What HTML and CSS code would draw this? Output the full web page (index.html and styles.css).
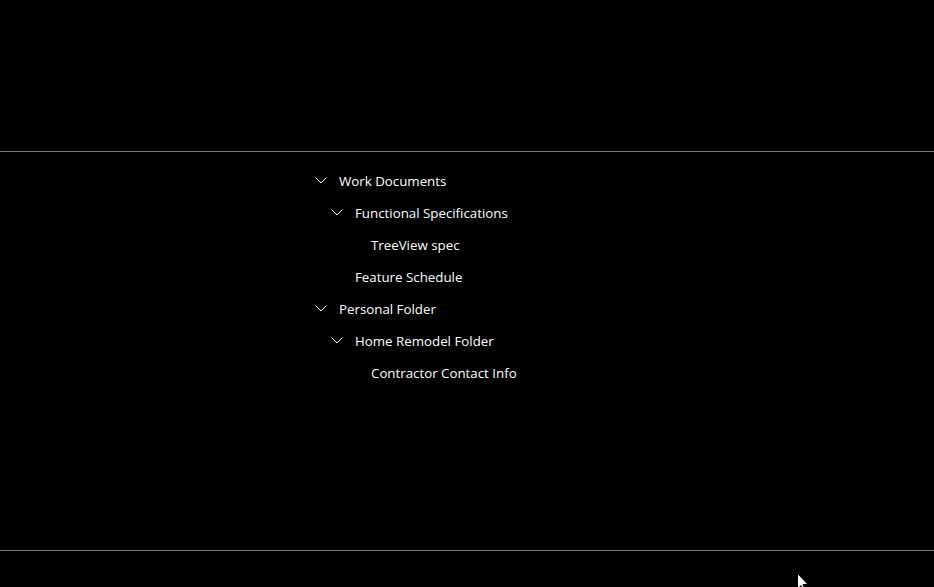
FILE: index.html
```html
<!DOCTYPE html>
<html>
<head>
<meta charset="utf-8">
<link rel="stylesheet" href="styles.css">
</head>
<body>
<div class="top"></div>
<div class="main">
  <ul class="tree">
    <li class="row lvl0"><span class="chev"><svg width="12" height="7" viewBox="0 0 12 7"><path d="M0.5 0.5 L6 6 L11.5 0.5" fill="none" stroke="#fff" stroke-width="1"/></svg></span><span class="label">Work Documents</span></li>
    <li class="row lvl1"><span class="chev"><svg width="12" height="7" viewBox="0 0 12 7"><path d="M0.5 0.5 L6 6 L11.5 0.5" fill="none" stroke="#fff" stroke-width="1"/></svg></span><span class="label">Functional Specifications</span></li>
    <li class="row lvl2"><span class="chev"></span><span class="label">TreeView spec</span></li>
    <li class="row lvl1"><span class="chev"></span><span class="label">Feature Schedule</span></li>
    <li class="row lvl0"><span class="chev"><svg width="12" height="7" viewBox="0 0 12 7"><path d="M0.5 0.5 L6 6 L11.5 0.5" fill="none" stroke="#fff" stroke-width="1"/></svg></span><span class="label">Personal Folder</span></li>
    <li class="row lvl1"><span class="chev"><svg width="12" height="7" viewBox="0 0 12 7"><path d="M0.5 0.5 L6 6 L11.5 0.5" fill="none" stroke="#fff" stroke-width="1"/></svg></span><span class="label">Home Remodel Folder</span></li>
    <li class="row lvl2"><span class="chev"></span><span class="label">Contractor Contact Info</span></li>
  </ul>
</div>
<div class="bottom"></div>
<svg class="cursor" width="12" height="19" viewBox="0 0 12 19"><path d="M0.5 0.5 L0.5 16 L4 12.5 L6.5 18 L8.5 17 L6 11.5 L11 11.5 Z" fill="#fff" stroke="#000" stroke-width="1"/></svg>
</body>
</html>
```

FILE: styles.css
```css
html, body {
  margin: 0;
  padding: 0;
  background: #000;
  height: 100%;
  overflow: hidden;
}
body {
  font-family: "Open Sans", "Noto Sans", sans-serif;
  color: #fff;
  display: flex;
  flex-direction: column;
  position: relative;
}
.top {
  height: 151px;
  border-bottom: 1px solid #7a7a7a;
  flex: none;
}
.main {
  height: 398px;
  flex: none;
  border-bottom: 1px solid #7a7a7a;
}
.bottom {
  flex: 1;
}
.tree {
  list-style: none;
  margin: 0;
  padding: 13px 0 0 310px;
}
.row {
  height: 32px;
  display: flex;
  align-items: center;
  font-size: 13.3px;
}
.lvl1 { padding-left: 16px; }
.lvl2 { padding-left: 32px; }
.chev {
  width: 29px;
  display: flex;
  align-items: center;
  padding-left: 5px;
  box-sizing: border-box;
  height: 32px;
  padding-bottom: 1px;
}
.label {
  line-height: 32px;
}
.cursor {
  position: absolute;
  left: 797px;
  top: 573px;
}
```
